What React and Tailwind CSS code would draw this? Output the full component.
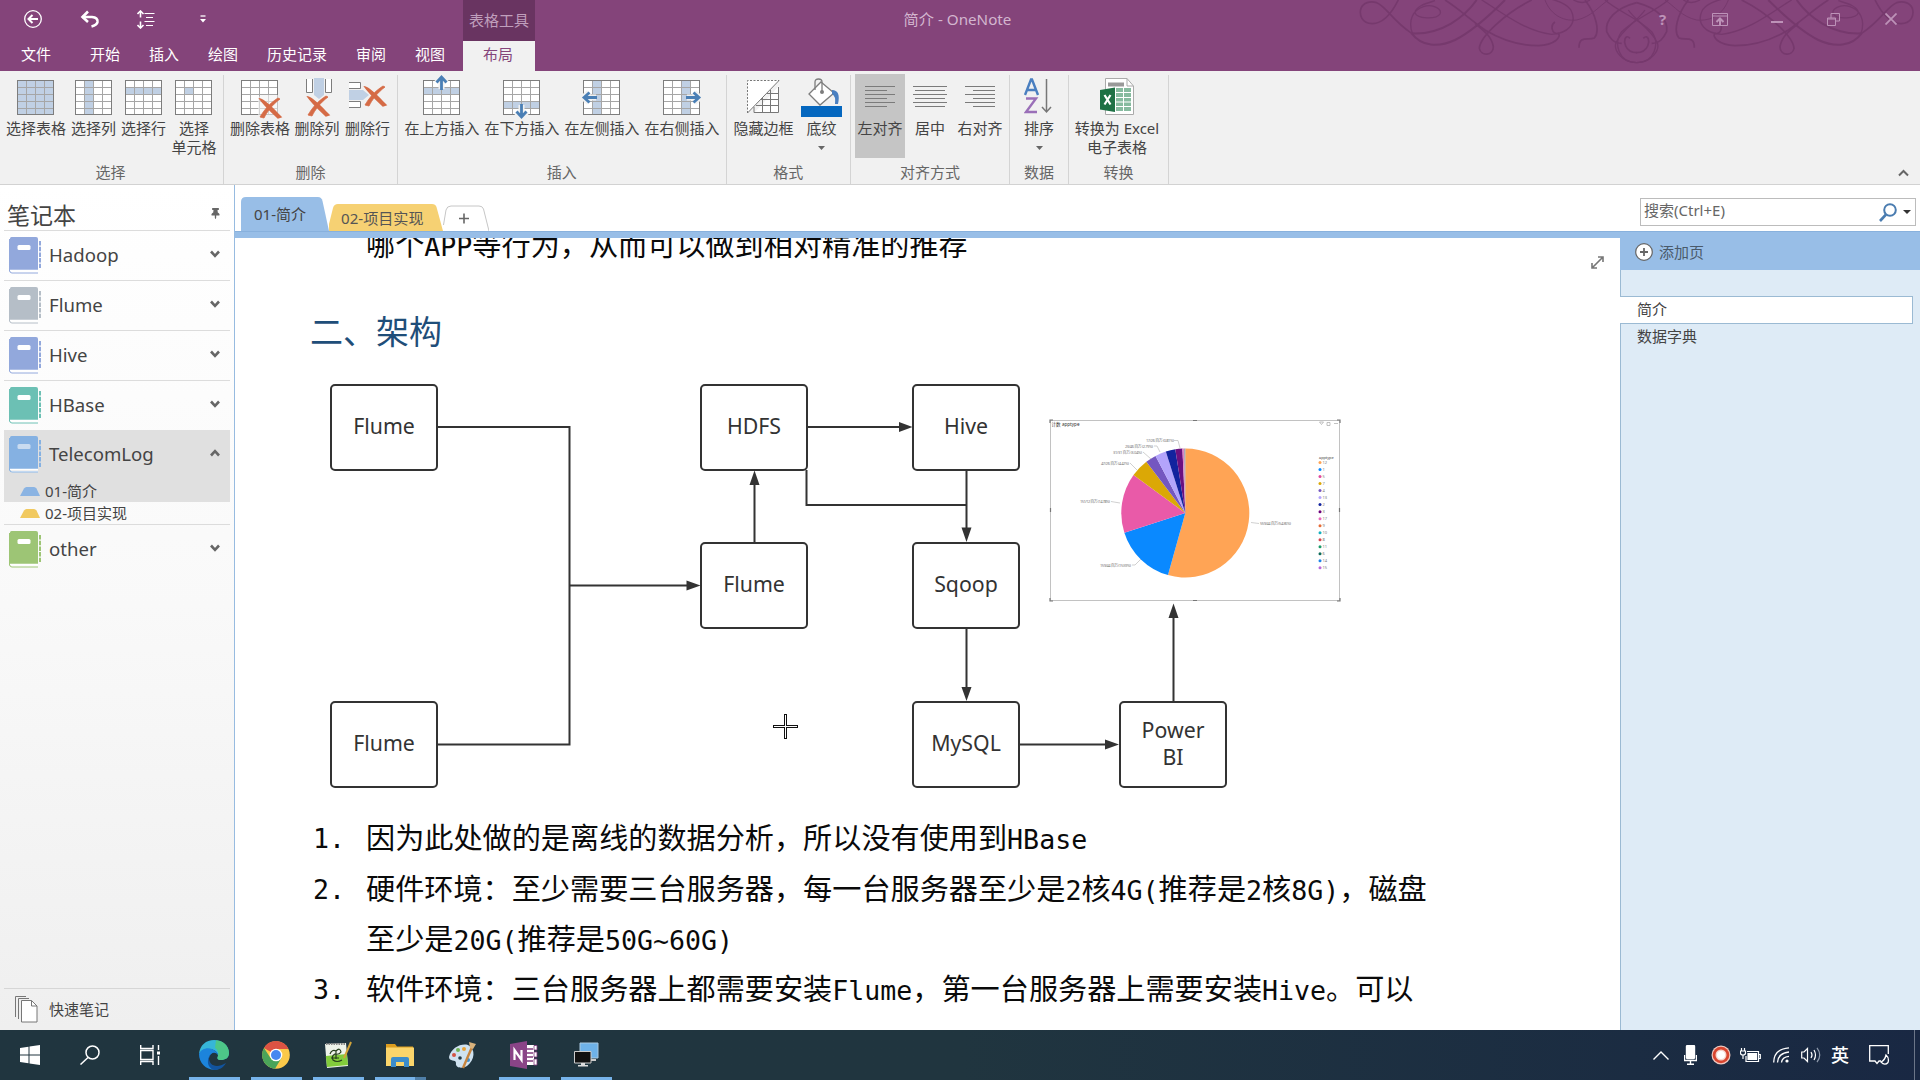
import { Fragment } from "react";
import { FaThumbtack } from "react-icons/fa";

const tabs = ["开始", "插入", "绘图", "历史记录", "审阅", "视图"];

const notebooks = [
  { name: "Hadoop", color: "#92a8dc" },
  { name: "Flume", color: "#b5bec7" },
  { name: "Hive", color: "#92a8dc" },
  { name: "HBase", color: "#6cc0b4" },
];

const nodes = [
  { label: "Flume", pos: "left-[95px] top-[22px]" },
  { label: "HDFS", pos: "left-[465px] top-[22px]" },
  { label: "Hive", pos: "left-[677px] top-[22px]" },
  { label: "Flume", pos: "left-[465px] top-[180px]" },
  { label: "Sqoop", pos: "left-[677px] top-[180px]" },
  { label: "Flume", pos: "left-[95px] top-[339px]" },
  { label: "MySQL", pos: "left-[677px] top-[339px]" },
  { label: "Power BI", pos: "left-[884px] top-[339px]" },
];

const slices = [
  { from: 0, to: 195.7, color: "#ffa455" },
  { from: 195.7, to: 252.2, color: "#0a89ff" },
  { from: 252.2, to: 306, color: "#e95aa8" },
  { from: 306, to: 322.5, color: "#dba806" },
  { from: 322.5, to: 332.3, color: "#7457c0" },
  { from: 332.3, to: 342.3, color: "#b3a4fb" },
  { from: 342.3, to: 351, color: "#12239e" },
  { from: 351, to: 357.4, color: "#6b1080" },
  { from: 357.4, to: 359, color: "#e083c4" },
  { from: 359, to: 360, color: "#8f9bab" },
];

const legend = [
  ["12", "#ffa455"], ["1", "#0a89ff"], ["5", "#e0489d"], ["7", "#dba806"],
  ["4", "#7457c0"], ["13", "#b3a4fb"], ["2", "#12239e"], ["3", "#6b007b"],
  ["17", "#e66bbb"], ["9", "#e66c37"], ["10", "#15b0c0"], ["8", "#d64550"],
  ["11", "#1a9a68"], ["6", "#0d6a58"], ["14", "#1d84ea"], ["15", "#b968d8"],
];

// Windows style 4x5 table glyph
const Grid = ({ fill, children }) => (
  <svg width="44" height="40" viewBox="-3 -3 44 40" className="overflow-visible">
    <rect x="0.5" y="0.5" width="36" height="34" fill="#fff" />
    {fill && <rect x={fill[0]} y={fill[1]} width={fill[2]} height={fill[3]} fill="#c0d0e4" />}
    <path d="M9.5 0v35M18.5 0v35M27.5 0v35M0 7.5h37M0 14.5h37M0 21.5h37M0 28.5h37" stroke="#a6a6a6" fill="none" />
    <rect x="0.5" y="0.5" width="36" height="34" fill="none" stroke="#7d7d7d" />
    {children}
  </svg>
);

const RedX = ({ x, y }) => (
  <g transform={`translate(${x} ${y})`} fill="#d56b46">
    <path d="M0 1C5 2 15 13 21 19L18 20C13 15 5 8 0 1Z" stroke="#d56b46" strokeWidth="1.4" />
    <path d="M18 0L20 1C12 7 7 14 4 20L0 19C4 12 10 5 18 0Z" stroke="#d56b46" strokeWidth="0.8" />
  </g>
);

const BlueArrow = ({ x, y, turn }) => (
  <g transform={`translate(${x} ${y}) rotate(${turn})`}>
    <path d="M0 7V-5M-5 0L0 -5.5L5 0" stroke="#f1f1f1" strokeWidth="6" fill="none" />
    <path d="M0 8V-4M-5 0.5L0 -5L5 0.5" stroke="#4a7fb5" strokeWidth="2.8" fill="none" />
  </g>
);

const AlignLines = ({ rows }) => (
  <svg width="36" height="40" viewBox="0 0 36 40">
    {rows.map(([a, b], i) => (
      <path key={i} d={`M${a} ${9.5 + i * 4}H${b}`} stroke="#7b7b7b" />
    ))}
  </svg>
);

const RibbonButton = ({ w, icon, label, label2, arrow, active }) => (
  <div className={`flex flex-col items-center h-[84px] -mt-px shrink-0 ${w} ${active ? "bg-[#c5c5c5]" : ""}`}>
    <div className="h-[45px] flex items-center justify-center">{icon}</div>
    <div className="text-[15px] leading-[19px] whitespace-nowrap text-[#444]">{label}</div>
    {label2 && <div className="text-[15px] leading-[19px] whitespace-nowrap text-[#444]">{label2}</div>}
    {arrow && (
      <svg width="7" height="4" className="mt-[8px]">
        <path d="M0 0H7L3.5 4Z" fill="#666" />
      </svg>
    )}
  </div>
);

const Group = ({ w, pad, title, children }) => (
  <div className={`shrink-0 flex flex-col h-[113px] ${w}`}>
    <div className="flex h-[109px] mt-1 border-r border-[#d4d4d4] flex-col">
      <div className={`flex h-[88px] ${pad}`}>{children}</div>
      <div className="text-center text-[15px] leading-[19px] text-[#666]">{title}</div>
    </div>
  </div>
);

const Book = ({ color, faded }) => (
  <svg width="33" height="37" viewBox="0 0 33 37" className="shrink-0">
    <path d="M2.500 0H27Q29 0 29 2V33.500H3Q1.500 33.500 1 35V1.500Q1 0 2.500 0Z" fill={color} />
    <path d="M1 33.500H29M2 35.500H29" stroke="#fff" strokeWidth="1.500" />
    <path d="M0.500 2V34Q1 36 3 36H29" stroke={color} fill="none" />
    <rect x="8.500" y="8" width="13" height="5" rx="1.500" fill={faded ? "#c9dbf0" : "#fff"} />
    <path d="M31 4V31" stroke={color} strokeWidth="2" strokeDasharray="4.500 1.200" />
  </svg>
);

const Chevron = ({ up }) => (
  <svg width="10" height="8" viewBox="0 0 10 8" className="-mt-[3px]">
    <path d={up ? "M1 6.500L5 2.200L9 6.500" : "M1 1.500L5 5.800L9 1.500"} stroke="#666" strokeWidth="2.600" fill="none" />
  </svg>
);

const NotebookRow = ({ name, color, open }) => (
  <div className="flex items-center h-[49px] pl-[5px] pr-[10px]">
    <Book color={color} faded={open} />
    <span className="ml-[7px] text-[18.600px] text-[#444] flex-1 leading-[46px] -mt-[2px]">{name}</span>
    <Chevron up={open} />
  </div>
);

const SectionRow = ({ name, color }) => (
  <div className="flex items-center h-[22px] pl-[16px]">
    <svg width="20" height="9" className="mr-[5px]">
      <path d="M0 9L4 1.500Q5 0 6.500 0H14Q15.500 0 16.500 1.500L20 9Z" fill={color} />
    </svg>
    <span className="text-[15px] leading-[22px] text-[#444]">{name}</span>
  </div>
);

// Latin runs are monospaced, Chinese runs keep the body font
const Mixed = ({ text }) =>
  text.split(/([\x21-\x7e]+)/).map((part, i) =>
    i % 2 ? (
      <span key={i} className="font-['DejaVu_Sans_Mono',monospace] text-[26.600px]">{part}</span>
    ) : (
      <Fragment key={i}>{part}</Fragment>
    )
  );

const Line = ({ num, text }) => (
  <div className="flex h-[50.400px] items-center pl-[78px] text-[29.150px] leading-[50px] text-[#0a0a0a] whitespace-nowrap">
    <span className="w-[53px] font-['DejaVu_Sans_Mono',monospace] text-[26.600px]">{num}</span>
    <span><Mixed text={text} /></span>
  </div>
);

const SwirlHalf = () => (
  <g>
    <path d="M130 0C110 40 85 71 52 71C20 70 12 45 18 25C25 8 45 2 65 8C95 20 110 60 170 100" strokeWidth="5" />
    <path d="M170 100C200 140 250 143 300 120C360 90 420 30 450 0" strokeWidth="6" />
    <path d="M170 100C260 105 330 50 365 0" strokeWidth="6" />
    <path d="M172 100C158 60 175 30 205 20C235 10 262 28 255 42C245 58 185 58 180 38C182 18 215 10 240 2" strokeWidth="4" />
    <path d="M270 0C310 25 335 50 390 90C440 120 490 137 550 137C600 135 620 110 610 100C590 105 585 75 600 66" strokeWidth="5" />
    <path d="M380 0C430 30 510 95 590 103C640 100 665 70 650 35C640 10 600 0 570 -8" strokeWidth="4" />
    <path d="M530 0C450 40 375 110 373 145C378 170 415 168 415 140C410 110 390 95 360 70" strokeWidth="5" />
    <path d="M570 0C585 40 620 65 665 60C710 50 730 20 760 0" strokeWidth="3" />
    <path d="M690 0C725 45 735 95 718 114C700 122 672 105 672 143" strokeWidth="5" />
    <path d="M655 0C670 8 690 10 705 0" strokeWidth="4" />
    <path d="M750 0C790 35 850 55 890 95C915 130 900 188 845 188C800 188 775 150 783 128C800 90 850 60 870 30" strokeWidth="4" />
    <path d="M845 8C780 25 750 60 755 95C765 115 775 130 800 130" strokeWidth="5" />
    <path d="M825 115C810 100 805 125 812 138C818 152 832 158 846 158" strokeWidth="5" />
  </g>
);

const TitleBar = () => (
  <div className="relative h-[71px] bg-[#84447a] flex overflow-hidden">
    <svg className="absolute left-[1355px] top-0" width="565" height="71" viewBox="0 0 1695 213" fill="none" stroke="#76396d">
      <SwirlHalf />
      <g transform="translate(1690 0) scale(-1 1)"><SwirlHalf /></g>
    </svg>
    <div className="relative w-[463px] flex flex-col shrink-0">
      <div className="h-[38px] flex items-center pl-[24px]">
        <svg width="18" height="18" viewBox="0 0 18 18" fill="none" stroke="#fff">
          <circle cx="9" cy="9" r="8.300" strokeWidth="1.300" />
          <path d="M14 9H5M8.500 5L4.500 9L8.500 13" strokeWidth="2" />
        </svg>
        <svg width="20" height="18" viewBox="0 0 20 18" fill="none" stroke="#fff" strokeWidth="2.600" className="ml-[38px]">
          <path d="M2 7H12Q18 7.500 17.500 12Q17 15 11.500 16.500" />
          <path d="M8 1.500L2.500 7L8 12" />
        </svg>
        <svg width="18" height="19" viewBox="0 0 18 19" fill="none" stroke="#fff" className="ml-[37px]">
          <path d="M3.500 1.500V7.500M3.500 11.500V17.500" strokeWidth="1.600" />
          <path d="M0.500 4L3.500 1L6.500 4M0.500 15L3.500 18L6.500 15" strokeWidth="1.600" />
          <path d="M7.500 3.500H17.500M9 7.500H16M7.500 11.500H17.500M9 15.500H16" />
        </svg>
        <svg width="6" height="8" className="ml-[45px]">
          <path d="M0.500 1H5.500" stroke="#fff" strokeWidth="1.300" />
          <path d="M0 4H6L3 7.500Z" fill="#fff" />
        </svg>
      </div>
      <div className="flex h-[33px] items-center text-white text-[15px] leading-[33px]">
        <span className="pl-[21px] w-[90px]">文件</span>
        <div className="flex gap-[29px]">
          {tabs.map((t) => <span key={t}>{t}</span>)}
        </div>
      </div>
    </div>
    <div className="relative w-[72px] shrink-0 text-[15px] text-center">
      <div className="h-[41px] bg-[#693461] text-[#c09fbc] leading-[40px]">表格工具</div>
      <div className="h-[30px] bg-[#f1f1f1] text-[#84447a] leading-[26px] pr-[2px]">布局</div>
    </div>
    <div className="relative flex-1 flex h-[38px] items-center">
      <span className="w-[845px] text-center text-[15.200px] leading-[20px] text-[#d3b6cf]">简介 - OneNote</span>
      <div className="ml-[279px] flex items-center text-[#bd92b8]">
        <span className="w-[10px] font-bold text-[15px]">?</span>
        <svg width="16" height="13" viewBox="0 0 16 13" fill="none" stroke="currentColor" className="ml-[43px]">
          <path d="M0.500 0.500H15.500V12.500H0.500ZM0.500 3H15.500" />
          <path d="M8 12V5.500M4.500 9L8 5.500L11.500 9" strokeWidth="2" />
        </svg>
        <svg width="12" height="12" viewBox="0 0 12 12" className="ml-[43px]"><path d="M0 9H12" stroke="currentColor" strokeWidth="2" /></svg>
        <svg width="13" height="13" viewBox="0 0 13 13" fill="none" stroke="currentColor" className="ml-[44px]">
          <path d="M0.500 5H8.500V12.500H0.500ZM0.500 6H8.500M4 5V0.500H12.500V8H9" />
        </svg>
        <svg width="12" height="12" viewBox="0 0 12 12" stroke="currentColor" strokeWidth="1.800" className="ml-[45px]">
          <path d="M0.500 0.500L11.500 11.500M11.500 0.500L0.500 11.500" />
        </svg>
      </div>
    </div>
  </div>
);

const Ribbon = () => (
  <div className="relative h-[114px] bg-[#f1f1f1] border-b border-[#d2d2d2] flex">
    <Group w="w-[224px]" pad="pl-[3px]" title={<span className="mr-[2px]">选择</span>}>
      <RibbonButton w="w-[66px]" label="选择表格" icon={<Grid fill={[0, 0, 37, 35]} />} />
      <RibbonButton w="w-[49px]" label="选择列" icon={<Grid fill={[9.5, 0, 9, 35]} />} />
      <RibbonButton w="w-[51px]" label="选择行" icon={<Grid fill={[0, 7.5, 37, 7]} />} />
      <RibbonButton w="w-[50px]" label="选择" label2="单元格" icon={<Grid fill={[9.5, 7.5, 9, 7]} />} />
    </Group>
    <Group w="w-[174px]" pad="pl-[4px]" title="删除">
      <RibbonButton w="w-[64px]" label="删除表格" icon={<Grid><path d="M17 18L20 15H38V36H17Z" fill="#f1f1f1" opacity="0.6" /><RedX x={19} y={18} /></Grid>} />
      <RibbonButton
        w="w-[50px]"
        label="删除列"
        icon={
          <svg width="30" height="40" viewBox="0 0 30 40" className="ml-[4px]">
            <path d="M2.500 2V15.500H8.500V2M21.500 2V15.500H27.500V2" fill="#fff" stroke="#7d7d7d" />
            <path d="M10 1H20V18L15 22L10 18Z" fill="#c0d0e4" />
            <RedX x={4} y={19} />
          </svg>
        }
      />
      <RibbonButton
        w="w-[51px]"
        label="删除行"
        icon={
          <svg width="40" height="40" viewBox="0 0 40 40">
            <path d="M1 5.500H12.500V11.500H1M1 24.500H12.500V30.500H1" fill="#fff" stroke="#7d7d7d" />
            <path d="M1 13H15L21 18L15 23H1Z" fill="#c0d0e4" />
            <RedX x={17} y={9} />
          </svg>
        }
      />
    </Group>
    <Group w="w-[328.500px]" pad="pl-[4px]" title="插入">
      <RibbonButton w="w-[80px]" label="在上方插入" icon={<Grid fill={[0, 7.5, 37, 7]}><BlueArrow x={18.5} y={2} turn={0} /></Grid>} />
      <RibbonButton w="w-[80px]" label="在下方插入" icon={<Grid fill={[0, 21.5, 37, 7]}><BlueArrow x={18.5} y={32} turn={180} /></Grid>} />
      <RibbonButton w="w-[80px]" label="在左侧插入" icon={<Grid fill={[9.5, 0, 9, 35]}><BlueArrow x={6} y={17.5} turn={-90} /></Grid>} />
      <RibbonButton w="w-[80px]" label="在右侧插入" icon={<Grid fill={[18.5, 0, 9, 35]}><BlueArrow x={31} y={17.5} turn={90} /></Grid>} />
    </Group>
    <Group w="w-[124.500px]" pad="pl-[3px]" title="格式">
      <RibbonButton
        w="w-[68px]"
        label="隐藏边框"
        icon={
          <svg width="36" height="40" viewBox="0 0 36 40" fill="none" className="mr-[2px]">
            <path d="M9 36L34 9V36Z" fill="#fff" />
            <path d="M2.500 36V3.500H34" fill="#fff" stroke="#777" strokeDasharray="2 1.500" />
            <path d="M2.500 36L34 3.500" stroke="#777" />
            <path d="M9 35.500H33.500V10M9 35.500V30M17.500 35V21M25.500 35V13M15 22.500H33M11 28.500H33M22 16.500H33" stroke="#777" />
          </svg>
        }
      />
      <RibbonButton
        w="w-[48px]"
        label="底纹"
        arrow
        icon={
          <svg width="41" height="40" viewBox="0 0 41 40" fill="none">
            <path d="M20 5L33 16L19 28L8 17Z" fill="#fff" stroke="#7d7d7d" strokeWidth="1.300" />
            <path d="M14 13V5Q14 2 17.500 2Q21 2 21 5V14" stroke="#7d7d7d" strokeWidth="1.300" />
            <circle cx="21" cy="15" r="2" fill="#7d7d7d" />
            <path d="M31 13Q40 13 37 27H34Q35 19 31 17Z" fill="#4a7fc0" />
            <rect x="0" y="29" width="41" height="11" fill="#0567bf" />
          </svg>
        }
      />
    </Group>
    <Group w="w-[159px]" pad="pl-[4px]" title="对齐方式">
      <RibbonButton w="w-[50px]" active label="左对齐" icon={<AlignLines rows={[[3, 33], [3, 25], [3, 33], [3, 25], [3, 33], [3, 25]]} />} />
      <RibbonButton w="w-[50px]" label="居中" icon={<AlignLines rows={[[1, 35], [3, 33], [1, 35], [3, 33], [1, 35], [3, 33]]} />} />
      <RibbonButton w="w-[50px]" label="右对齐" icon={<AlignLines rows={[[3, 33], [11, 33], [3, 33], [11, 33], [3, 33], [11, 33]]} />} />
    </Group>
    <Group w="w-[59px]" pad="pl-[4px]" title="数据">
      <RibbonButton
        w="w-[50px]"
        label="排序"
        arrow
        icon={
          <svg width="28" height="40" viewBox="0 0 28 40" fill="none" className="mr-[2px]">
            <path d="M1 18L7 2.500H8L14 18M3.500 13H12" stroke="#4a7fc0" strokeWidth="2.400" />
            <path d="M2 21.500H12L2 35H13" stroke="#9a6fb8" strokeWidth="2.400" />
            <path d="M22.500 2V35M18 30L22.500 35L27 30" stroke="#777" strokeWidth="1.500" />
          </svg>
        }
      />
    </Group>
    <Group w="w-[100px]" pad="pl-[3px]" title="转换">
      <RibbonButton
        w="w-[90px]"
        label="转换为 Excel"
        label2="电子表格"
        icon={
          <svg width="34" height="40" viewBox="0 0 34 40">
            <path d="M5.500 1.500H27L33.500 9V37.500H5.500Z" fill="#fff" stroke="#aaa" />
            <path d="M27 1.500V9H33" fill="none" stroke="#aaa" />
            <path d="M8 5.500H24V9.500H8Z" fill="#999" />
            <path d="M16 11H31V34H16Z" fill="#86bb9f" />
            <path d="M16 15.500H31M16 20.500H31M16 25H31M16 29.500H31M23.500 11V34" stroke="#fff" />
            <path d="M0 13L15 10.500V35L0 32.500Z" fill="#1e7145" />
            <path d="M4.500 18L10.500 27.500M10.500 18L4.500 27.500" stroke="#fff" strokeWidth="2.200" />
          </svg>
        }
      />
    </Group>
    <svg width="11" height="8" viewBox="0 0 11 8" className="ml-auto mr-[11px] mt-[98px]">
      <path d="M1 6.500L5.500 2L10 6.500" stroke="#666" strokeWidth="2" fill="none" />
    </svg>
  </div>
);

const Sidebar = () => (
  <div className="w-[235px] shrink-0 border-r border-[#97bbe0] bg-linear-to-b from-white via-[#f9f9f9] to-[#efefef] flex flex-col pl-[4px] pr-[4px]">
    <div className="flex items-center justify-between h-[46px] border-b border-[#dcdcdc] pl-[3px] pr-[9px]">
      <span className="text-[23px] leading-[40px] pt-[14px] text-[#444]">笔记本</span>
      <FaThumbtack className="text-[11px] mt-[12px] text-[#666]" />
    </div>
    {notebooks.map((n, i) => (
      <div key={n.name} className={i < 3 ? "border-b border-[#dcdcdc]" : ""}>
        <NotebookRow {...n} />
      </div>
    ))}
    <div className="bg-[#e0e0e0] h-[72px]">
      <NotebookRow name="TelecomLog" color="#85b1e2" open />
      <div className="pt-px">
        <SectionRow name="01-简介" color="#8bb4e3" />
      </div>
    </div>
    <div className="h-[23px] border-b border-[#dcdcdc]">
      <SectionRow name="02-项目实现" color="#f1c95f" />
    </div>
    <NotebookRow name="other" color="#9dc575" />
    <div className="mt-auto h-[42px] border-t border-[#d6d6d6] flex items-center pl-[11px]">
      <svg width="23" height="27" viewBox="0 0 23 27" fill="none" stroke="#777">
        <path d="M0.500 21V0.500H11M3.500 23V2.500H14" />
        <path d="M6.500 4.500H16.500L22 10V26H6.500Z" fill="#fff" />
        <path d="M16.500 4.500V10H22" />
      </svg>
      <span className="ml-[11px] text-[15px] text-[#444]">快速笔记</span>
    </div>
  </div>
);

const Pie = () => {
  const pt = (deg) => {
    const a = (deg * Math.PI) / 180;
    return `${(1185.3 + 64 * Math.sin(a)).toFixed(2)} ${(513 - 64.5 * Math.cos(a)).toFixed(2)}`;
  };
  return (
    <g>
      <rect x="1050.500" y="420.500" width="289" height="180" fill="#fff" stroke="#c2c2c2" />
      <path d="M1050 423V420H1053M1337 420H1340V423M1340 598V601H1337M1053 601H1050V598M1193 420.500H1197M1193 600.500H1197M1050.500 508V512M1339.500 508V512" stroke="#777" strokeWidth="1.200" fill="none" />
      {slices.map((s) => (
        <path key={s.from} d={`M1185.300 513L${pt(s.from)}A64 64.500 0 ${s.to - s.from > 180 ? 1 : 0} 1 ${pt(s.to)}Z`} fill={s.color} />
      ))}
      <g fontSize="4" fill="#777">
        <text x="1051.500" y="425.500" fill="#333" fontSize="4.600">计数 apptype</text>
        <text x="1146" y="442" textLength="28">17/26 百万 (0.81%)</text>
        <text x="1125" y="447.500" textLength="28">23/46 百万 (2.79%)</text>
        <text x="1113" y="453.500" textLength="29">31/31 百万 (3.04%)</text>
        <text x="1101" y="464.500" textLength="28">47/26 百万 (4.42%)</text>
        <text x="1080" y="503" textLength="30">151/12 百万 (14.78%)</text>
        <text x="1100" y="566.500" textLength="31">159/44 百万 (15.59%)</text>
        <text x="1260" y="524.500" textLength="31">559/44 百万 (54.36%)</text>
        <text x="1319" y="458.500" fontSize="3.800" fill="#333">apptype</text>
        {legend.map(([n, c], i) => (
          <g key={n}>
            <circle cx="1320" cy={462.5 + i * 7.02} r="1.500" fill={c} />
            <text x="1322.500" y={464 + i * 7.02}>{n}</text>
          </g>
        ))}
      </g>
      <path d="M1174 440.500H1178L1180 448M1154 446H1157L1160 452M1143 452L1151 459M1130 463L1137 470M1111 501.500L1120 503M1132 565H1135L1141 559M1251 522.500L1259 523.500" stroke="#bbb" fill="none" strokeWidth="0.700" />
      <path d="M1319.500 422H1323.500L1321.500 424.500ZM1327 422.500H1330V425.500H1327ZM1334 423.500H1338" stroke="#999" strokeWidth="0.600" fill="none" />
    </g>
  );
};

const Diagram = () => (
  <div className="relative h-[452px]">
    <svg className="absolute left-0 top-0" width="1385" height="451" viewBox="235 362 1385 451" fill="none">
      <g stroke="#333" strokeWidth="2">
        <path d="M438 427H569.500V744.500H438" />
        <path d="M569.500 585.500H690M754.500 542V480M808 427H902M806.500 470V505H966" />
        <path d="M966.500 470V532M966.500 629V690M1020 744.500H1108M1173.500 701V615" />
      </g>
      <g fill="#333">
        <path d="M700.500 585.500L686.500 580.500V590.500ZM912.500 427L899 422V432ZM1119 744.500L1105 739.500V749.500Z" />
        <path d="M754.500 470.500L749.500 485H759.500ZM1173.500 603.500L1168.500 618H1178.500Z" />
        <path d="M966.500 542L961.500 527.500H971.500ZM966.500 701L961.500 687H971.500Z" />
      </g>
      <Pie />
    </svg>
    {nodes.map((n) => (
      <div
        key={n.pos}
        className={`absolute w-[108px] h-[87px] border-2 border-[#333] rounded-[5px] bg-white flex items-center justify-center text-center text-[21.300px] leading-[26.500px] text-[#333] px-4 pb-[2px] ${n.pos}`}
      >
        {n.label}
      </div>
    ))}
    <svg className="absolute left-[538px] top-[352px]" width="25" height="25" viewBox="0 0 25 25">
      <path d="M11 0H14V11H25V14H14V25H11V14H0V11H11Z" fill="#111" />
      <path d="M12.500 1V24M1 12.500H24" stroke="#fff" />
    </svg>
  </div>
);

const Page = () => (
  <div className="relative flex-1 overflow-hidden bg-white">
    <div className="-mt-[18px]" />
    <div className="pl-[131px] h-[50px] text-[29.150px] leading-[50px] text-[#0a0a0a] whitespace-nowrap">
      <Mixed text="哪个APP等行为，从而可以做到相对精准的推荐" />
    </div>
    <div className="mt-8 h-[60px] pl-[75px] text-[33px] leading-[59px] text-[#1f4e79]">二、架构</div>
    <Diagram />
    <Line num="1." text="因为此处做的是离线的数据分析，所以没有使用到HBase" />
    <Line num="2." text="硬件环境：至少需要三台服务器，每一台服务器至少是2核4G(推荐是2核8G)，磁盘" />
    <Line num="" text="至少是20G(推荐是50G~60G)" />
    <Line num="3." text="软件环境：三台服务器上都需要安装Flume，第一台服务器上需要安装Hive。可以" />
    <svg className="absolute right-[16px] top-[18px]" width="13" height="13" viewBox="0 0 13 13" fill="none" stroke="#777" strokeWidth="1.600">
      <path d="M1.500 11.500L11.500 1.500M7 1H12V6M1 7V12H6" />
    </svg>
  </div>
);

const SectionTabs = () => (
  <div className="h-[46px] flex items-end pl-[6px]">
    <div className="relative w-[88px] h-[34px]">
      <svg className="absolute inset-0" width="88" height="34"><path d="M0 34V5Q0 0 5 0H77Q80.500 0 81.500 4L88 34Z" fill="#98bee7" /></svg>
      <span className="relative pl-[13px] text-[15px] leading-[35px] text-[#444]">01-简介</span>
    </div>
    <div className="relative w-[114px] h-[27px]">
      <svg className="absolute inset-0" width="114" height="27"><path d="M0 27V20L4 4Q5 0 9 0H103Q106.500 0 107.500 3L114 27Z" fill="#f6d173" /></svg>
      <span className="relative pl-[12px] text-[15.100px] leading-[29px] text-[#555] whitespace-nowrap">02-项目实现</span>
    </div>
    <svg width="46" height="26" viewBox="0 0 46 26" fill="none">
      <path d="M0.500 20L3 5Q4 1 8 1H36Q39.500 1 40.500 4L46 26" stroke="#c6c6c6" />
      <path d="M21 8.500V18.500M16 13.500H26" stroke="#666" strokeWidth="1.600" />
    </svg>
    <div className="ml-auto mr-[4px] mb-[5px] w-[276px] h-[28px] bg-white border border-[#bcbcbc] flex items-center pl-[3px] pr-[4px]">
      <span className="flex-1 text-[15px] leading-[20px] -mt-[5px] text-[#666]">搜索(Ctrl+E)</span>
      <svg width="18" height="19" viewBox="0 0 18 19" fill="none" stroke="#4a7cb0">
        <circle cx="11" cy="7" r="5.800" strokeWidth="2" />
        <path d="M7 11.500L1 18" strokeWidth="2.600" />
      </svg>
      <svg width="8" height="4" className="ml-[6px]"><path d="M0 0H8L4 4Z" fill="#333" /></svg>
    </div>
  </div>
);

const PageList = () => (
  <div className="w-[300px] shrink-0 flex flex-col text-[15px] text-[#444]">
    <div className="h-[33px] bg-[#98bee7] flex items-center pl-[15px] -mt-px pb-[3px]">
      <svg width="18" height="18" viewBox="0 0 18 18" fill="none">
        <circle cx="9" cy="9" r="8.300" fill="#fff" stroke="#666" strokeWidth="1.200" />
        <path d="M9 5V13M5 9H13" stroke="#666" strokeWidth="1.800" />
      </svg>
      <span className="ml-[6px] leading-[20px] -mt-px text-[#4a5a6a]">添加页</span>
    </div>
    <div className="flex-1 bg-[#deebf6] flex flex-col">
      <div className="h-[26px] border-l border-[#9bbad3]" />
      <div className="h-[28px] mr-[7px] bg-white border-y border-r border-[#9bbad3] pl-[17px] leading-[25px]">简介</div>
      <div className="flex-1 border-l border-[#9bbad3] pl-[16px] leading-[24px]">数据字典</div>
    </div>
  </div>
);

const EdgeIcon = () => (
  <svg width="30" height="30" viewBox="0 0 30 30">
    <path d="M0 14C1 5 7 0 15 0C24 0 30 6 30 13C30 18 26 20 22 20C18 20 18 18 19 16C19 12 15 9 10 9C5 9 2 11 0 14Z" fill="#36b6d8" />
    <path d="M17 0.200C25 1 30 6 30 13C30 18 26 20 22 20C18 20 18 18 19 16C20 12 18 9 16 8Z" fill="#54ca74" opacity="0.800" />
    <path d="M0 14C2 9 8 7 13 9C17 11 19 13 19 15C16 11 11 13 10 18C9 24 14 29 20 29C10 32 0 25 0 14Z" fill="#1c84dc" />
    <path d="M10 18C10 25 17 29 27 23C24 28 20 30 15 30C8 28 7 19 12 14C11 16 10 17 10 18Z" fill="#12549e" />
  </svg>
);

const ChromeIcon = () => (
  <svg width="28" height="28" viewBox="0 0 28 28">
    <circle cx="14" cy="14" r="13.800" fill="#fbc94a" />
    <path d="M14 14L2 7A13.800 13.800 0 0 1 26.500 8H14Z" fill="#dc5343" />
    <path d="M2 7A13.800 13.800 0 0 0 13 27.800L19.500 17L14 14L8.500 17Z" fill="#4aa459" />
    <circle cx="14" cy="14" r="6.300" fill="#fff" />
    <circle cx="14" cy="14" r="5" fill="#4687f0" />
  </svg>
);

const NotepadIcon = () => (
  <svg width="28" height="28" viewBox="0 0 28 28">
    <path d="M1 3L22 2L24 25L3 27Z" fill="#eef3ea" />
    <path d="M1.800 15L23 13L24 24L3 26Z" fill="#82cc3c" />
    <path d="M2 3H21" stroke="#888" strokeWidth="2" strokeDasharray="1.500 1" />
    <path d="M6 13Q8 8 12 10Q16 6 17 11Q15 14 11 13Q7 15 9 19Q13 22 18 19M7 17H15M12 10V18" stroke="#263f1c" strokeWidth="1.200" fill="none" />
    <path d="M27 1L20 17" stroke="#d2a43a" strokeWidth="2" />
  </svg>
);

const FolderIcon = () => (
  <svg width="28" height="25" viewBox="0 0 28 25">
    <path d="M0 1H9L11 3.500H27V8H0Z" fill="#dc9d1f" />
    <path d="M0 4.500H28V23H0Z" fill="#fbd56b" />
    <path d="M5 24V16Q5 14 7 14H21Q23 14 23 16V24H18V19H10V24Z" fill="#3d8dcb" />
  </svg>
);

const PaintIcon = () => (
  <svg width="30" height="28" viewBox="0 0 30 28">
    <path d="M2 16C4 7 14 2 21 4C29 8 28 19 20 25C15 28 8 27 9 22C9 18 2 21 2 16Z" fill="#cfe2f0" />
    <circle cx="7" cy="14" r="2" fill="#d35445" />
    <circle cx="11" cy="9" r="2" fill="#71b255" />
    <circle cx="17" cy="8" r="2" fill="#e8a33a" />
    <circle cx="13" cy="17" r="1.800" fill="#243944" />
    <circle cx="21" cy="19" r="2" fill="#3b8ed0" />
    <path d="M25 6L16 27" stroke="#c7843d" strokeWidth="2.400" />
    <path d="M22 1L29 3L26 8L23 7Z" fill="#d8b27c" />
  </svg>
);

const OneNoteIcon = () => (
  <svg width="28" height="28" viewBox="0 0 28 28">
    <path d="M14 4H24V24H14Z" fill="#fff" />
    <path d="M24 4.500H27V9H24ZM24 11H27V16H24ZM24 18H27V24H24Z" fill="#fff" stroke="#80397b" strokeWidth="0.800" />
    <path d="M17 8H23M17 12H23M17 16H23M17 20H23" stroke="#80397b" strokeWidth="1.600" />
    <path d="M0 3L17 0V28L0 25Z" fill="#8a4487" />
    <path d="M4.500 19V9L11.500 19V9" stroke="#fff" strokeWidth="2.200" fill="none" />
  </svg>
);

const RemoteIcon = () => (
  <svg width="25" height="26" viewBox="0 0 25 26">
    <path d="M6 1H24V16H6Z" fill="#6eb2e8" stroke="#a9c9e0" />
    <path d="M17 17H22V19H17Z" fill="#ccc" />
    <path d="M0.500 9.500H17V21H0.500Z" fill="#111" stroke="#ccc" />
    <path d="M7 21H11V23H14V24.500H4V23H7Z" fill="#ddd" />
  </svg>
);

const apps = [
  { icon: <EdgeIcon />, running: true },
  { icon: <ChromeIcon />, running: true },
  { icon: <NotepadIcon />, running: true },
  { icon: <FolderIcon />, running: true, multi: true },
  { icon: <PaintIcon /> },
  { icon: <OneNoteIcon />, running: true },
  { icon: <RemoteIcon />, running: true },
];

const Taskbar = () => (
  <div className="h-[50px] shrink-0 bg-linear-to-r from-[#20353f] via-[#20353f] to-[#192843] flex items-stretch text-white">
    <div className="w-[60px] flex items-center justify-center">
      <svg width="20" height="20" viewBox="0 0 20 20" fill="#fff"><path d="M0 3L8.500 1.700V9.500H0ZM9.500 1.500L20 0V9.500H9.500ZM0 10.500H8.500V18.300L0 17ZM9.500 10.500H20V20L9.500 18.500Z" /></svg>
    </div>
    <div className="w-[60px] flex items-center justify-center">
      <svg width="20" height="20" viewBox="0 0 20 20" fill="none" stroke="#fff" strokeWidth="1.500"><circle cx="12.500" cy="7.500" r="6.500" /><path d="M8 12.500L0.500 19.500" /></svg>
    </div>
    <div className="w-[63px] flex items-center justify-center pr-[3px]">
      <svg width="20" height="20" viewBox="0 0 20 20" fill="none" stroke="#fff" strokeWidth="1.400">
        <path d="M0.700 0V3.500H13V0M0.700 20V16.500H13V20M0.700 5.500H13V14.500H0.700ZM18.500 0V5M18.500 11V20" />
        <path d="M17 8H20" strokeWidth="3" />
      </svg>
    </div>
    {apps.map((a, i) => (
      <div key={i} className="w-[62px] relative flex items-center justify-center">
        {a.icon}
        {a.running && <div className="absolute bottom-0 left-[6px] w-[51px] h-[3px] bg-[#76b3ea]" />}
        {a.multi && <div className="absolute bottom-0 left-[46px] w-[11px] h-[3px] bg-[#4f7fa8]" />}
      </div>
    ))}
    <div className="ml-auto flex items-center pr-[5px]">
      <svg width="16" height="9" viewBox="0 0 16 9" fill="none" stroke="#fff" strokeWidth="1.400"><path d="M0.500 8.500L8 1L15.500 8.500" /></svg>
      <svg width="13" height="20" viewBox="0 0 13 20" className="ml-[15px]" fill="none" stroke="#fff" strokeWidth="1.400">
        <rect x="2.500" y="0.500" width="8" height="13" rx="1" fill="#fff" /><path d="M0.500 10V15.500H12.500V10M6.500 15V19M3 19.300H10" />
      </svg>
      <svg width="20" height="20" viewBox="0 0 20 20" className="ml-[14px]">
        <circle cx="10" cy="10" r="9.500" fill="#f0c9c0" /><circle cx="10" cy="10" r="8.300" fill="#d8452f" />
        <circle cx="10" cy="10" r="5.500" fill="#f5d5cd" /><circle cx="10" cy="10" r="4" fill="#fff" />
      </svg>
      <svg width="21" height="15" viewBox="0 0 21 15" className="ml-[9px]" fill="none" stroke="#fff" strokeWidth="1.200">
        <path d="M7 3.500H18.500V13.500H6V8M18.500 6.500H20.300V10.500H18.500M1.500 0V2.500M4.500 0V2.500M0.500 3H5.500V5Q5.500 7 3 7Q0.500 7 0.500 5ZM3 7V11" />
        <path d="M8 5.500H16.500V11.500H8Z" fill="#fff" />
      </svg>
      <svg width="17" height="16" viewBox="0 0 17 16" className="ml-[12px]" fill="none" stroke="#fff" strokeWidth="1.300">
        <path d="M0.700 15.500Q1 2 16 0.800M4.500 15.500Q5 6 16 5M8.500 15.500Q9 10 16 9.300" /><circle cx="14" cy="14" r="1.600" fill="#fff" stroke="none" />
      </svg>
      <svg width="20" height="16" viewBox="0 0 20 16" className="ml-[11px]" fill="none" stroke="#fff" strokeWidth="1.200">
        <path d="M0.700 5H3L6.500 1.500V14.500L3 11H0.700ZM10 5Q12 8 10 11M13 3Q16 8 13 13" /><path d="M16 0.800Q21.500 8 16 15.200" stroke="#8f9bad" />
      </svg>
      <span className="ml-[10px] text-[18px] leading-none font-medium">英</span>
      <svg width="21" height="20" viewBox="0 0 21 20" className="ml-[20px]" fill="none" stroke="#fff" strokeWidth="1.300">
        <path d="M12 16H10L8 18.500L6 16H0.700V0.700H19.300V9" /><path d="M17 10Q16 15 12 17Q16 21 19 17.500Q20.500 13 17 10Z" />
      </svg>
      <div className="ml-[24px] w-px h-[50px] bg-[#6b7688]" />
    </div>
  </div>
);

const App = () => {
  return (
    <div className="w-[1920px] h-[1080px] overflow-hidden flex flex-col bg-white font-['Noto_Sans','Noto_Sans_CJK_SC',sans-serif]">
      <TitleBar />
      <Ribbon />
      <div className="flex flex-1 min-h-0">
        <Sidebar />
        <div className="flex-1 flex flex-col min-w-0">
          <SectionTabs />
          <div className="h-[7px] shrink-0 bg-[#98bee7] border-t border-[#88b1dd]" />
          <div className="flex flex-1 min-h-0">
            <Page />
            <PageList />
          </div>
        </div>
      </div>
      <Taskbar />
    </div>
  );
};

export default App;
